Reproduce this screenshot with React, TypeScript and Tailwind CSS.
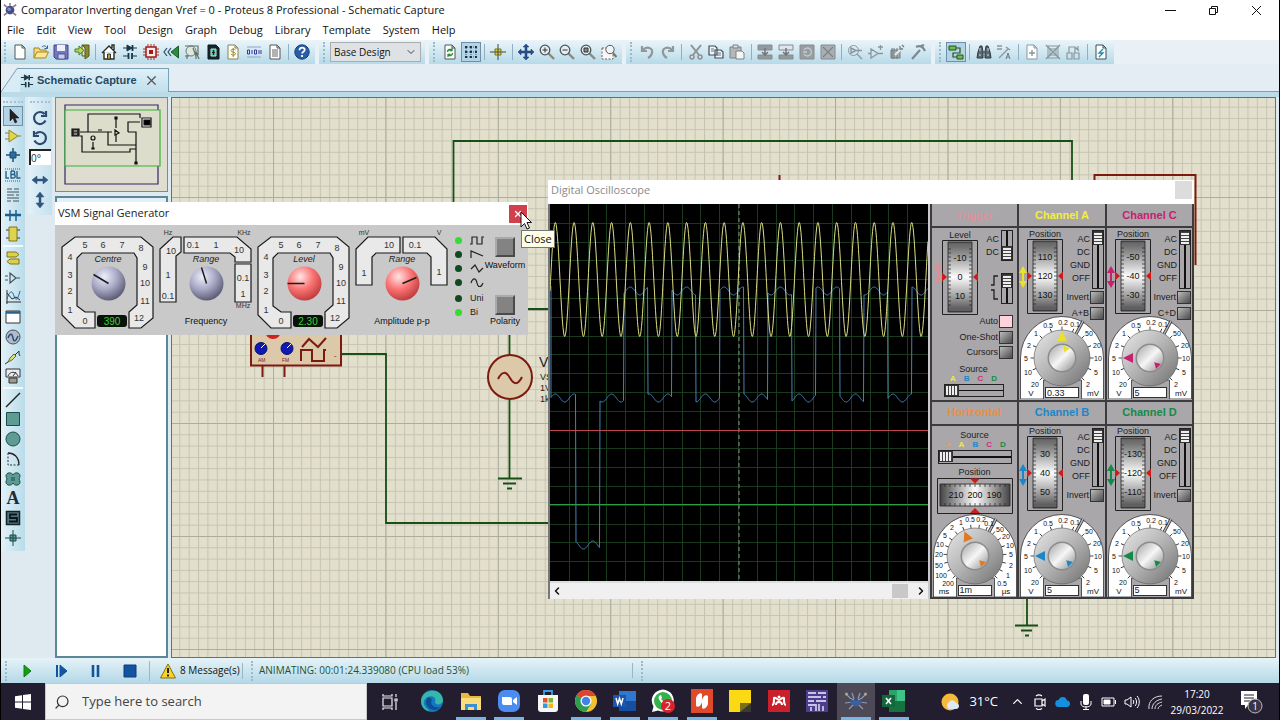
import React from "react";
import { ChevronUp, ChevronDown, ChevronLeft, ChevronRight, Search, X } from "lucide-react";

type Kids = { children?: React.ReactNode };

/* ---------- toolbar primitives ---------- */

function Tool({ label, active, children }: Kids & { label: string; active?: boolean }) {
  return (
    <button
      type="button"
      aria-label={label}
      title={label}
      className={
        "flex h-[18px] w-[18px] shrink-0 items-center justify-center " +
        (active ? "bg-[#b5d3e6] outline outline-1 outline-[#6f8fa5]" : "")
      }
    >
      <svg viewBox="0 0 16 16" className="h-4 w-4" fill="none" stroke="#333" strokeWidth="1">
        {children}
      </svg>
    </button>
  );
}

const Sep = () => (
  <span className="flex h-4 w-1 shrink-0 justify-center">
    <span className="h-4 w-px bg-[#8fb0c4]" />
  </span>
);

const Grip = () => <span className="h-5 w-0 shrink-0 border-l-2 border-dotted border-[#9db9ca]" />;

const Lens = ({ children }: Kids) => (
  <g>
    <path d="M9.5 9.5 15 15" stroke="#8a8a80" strokeWidth="2.4" />
    <circle cx="6" cy="6" r="4.8" fill="#e3edf2" stroke="#4a555c" strokeWidth="1.3" />
    {children}
  </g>
);

const Gates = () => (
  <g stroke="#173848" fill="#173848">
    <path d="M1 4h4M9 4h6M1 12h5M10 12h5" strokeWidth="1.2" />
    <path d="M5 1v6l5-3z" />
    <path d="M10.5 1v6M6.5 9v6M10 9v6" strokeWidth="1.8" />
  </g>
);

const PageShape = ({ stroke = "#555" }: { stroke?: string }) => (
  <path d="M3 1h7l3 3v11H3zM10 1v3h3" fill="#fdfefe" stroke={stroke} />
);

function MainToolbar() {
  return (
    <div className="flex h-6 items-center bg-[#eaf1f6]">
      <div className="flex h-6 items-center gap-[5px] bg-gradient-to-b from-[#eaf5fa] to-[#b7dae8] pl-[3px]">
        <Grip />
        <div className="flex w-[304px] items-center justify-between pr-1">
          <Tool label="New Project"><PageShape /></Tool>
          <Tool label="Open Project">
            <path d="M1 14V4h5l1 2h6v2" fill="#f5dc7c" stroke="#a8821a" />
            <path d="M1 14 4 8h11.5l-3 6z" fill="#fbe897" stroke="#a8821a" />
            <path d="M9 3c2-2 4-1 5 1M14.5 1.500v3h-3" stroke="#3c5a94" />
          </Tool>
          <Tool label="Save Project">
            <path d="M1 1h14v14H3l-2-2z" fill="#7477bb" stroke="#42458b" />
            <path d="M4 1h8v6H4z" fill="#eef0fb" stroke="none" />
            <path d="M5 10h7v5H5z" fill="#c9cbea" stroke="#42458b" strokeWidth=".8" />
          </Tool>
          <Tool label="Close Project">
            <path d="M8 1h7v11l-4 3V4z" fill="#8c8a28" stroke="#55561a" />
            <path d="M8 1v11h3" stroke="#55561a" />
            <path d="M1 5h4V2l5 4.500-5 4.500V8H1z" fill="#b7d954" stroke="#4f7a1c" />
          </Tool>
          <Sep />
          <Tool label="Home Page">
            <path d="M1 9 8 2l7 7M3 8v7h10V8M11 4V1h2v5" fill="#fff" stroke="#2c2c24" strokeWidth="1.4" />
            <path d="M6.500 10h3v5h-3z" fill="#c79b2c" />
          </Tool>
          <Tool label="Schematic Capture"><Gates /></Tool>
          <Tool label="PCB Layout">
            <path d="M5 0v16M8 0v16M11 0v16M0 5h16M0 8h16M0 11h16" stroke="#a33" />
            <path d="M3 3h10v10H3z" fill="#fbe9e6" stroke="#a01c1c" strokeWidth="1.5" />
            <path d="M6 6h4v4H6z" fill="#a01c1c" stroke="none" />
          </Tool>
          <Tool label="3D Visualizer">
            <path d="M15.500 2v12L8 8z" fill="#2e8a3c" stroke="#1b5c27" />
            <path d="M4 4 1 8l3 4M8 4 5 8l3 4" stroke="#244d63" strokeWidth="1.200" />
          </Tool>
          <Tool label="Gerber Viewer">
            <circle cx="7" cy="7" r="5" fill="#dce8dc" stroke="#6c7c74" />
            <path d="M1 2h13v9M3 15v-4M1 12h4M12 15V8l3 7M12 12l-3-8" stroke="#5f6f66" strokeWidth="1.200" />
          </Tool>
          <Tool label="Design Explorer">
            <path d="M3 1h8l3 3v11H3z" fill="#12262c" stroke="#0a171b" />
            <path d="M6 5h5v7H6z" fill="#3b7" stroke="#cde" />
            <path d="M8.500 6v5M7 8.500h3" stroke="#12262c" />
          </Tool>
          <Tool label="Bill of Materials">
            <PageShape stroke="#8a8250" />
            <path d="M10.500 6c-1-1.500-4.500-1-4.500.7 0 2 4.500 1 4.500 3 0 1.800-3.500 2-4.500.3M8.200 4v9" stroke="#a38a1c" />
          </Tool>
          <Tool label="Source Code">
            <path d="M1 3h14M1 13h14" stroke="#8aa7c8" />
            <path d="M1.500 6h2v4h-2zM6 6v4M8.500 6h2v4h-2zM13 6v4M15 6v4" stroke="#3a3a9c" />
          </Tool>
          <Tool label="Project Notes">
            <PageShape />
            <path d="M5 6h6M5 8h6M5 10h6M5 12h6" stroke="#666" />
          </Tool>
          <Sep />
          <Tool label="Help">
            <circle cx="8" cy="8" r="7.200" fill="#2a5da8" stroke="#173d78" />
            <path d="M5.500 6.200C5.500 2.600 11 3 10.700 6c-.2 1.700-2.500 1.700-2.600 3.500M8.100 11v2" stroke="#fff" strokeWidth="1.800" />
          </Tool>
        </div>
      </div>
      <div className="ml-1 flex h-6 items-center gap-[5px] bg-gradient-to-b from-[#eaf5fa] to-[#b7dae8] pr-1 pl-1">
        <Grip />
        <div className="relative flex">
          <select
            aria-label="Design variant"
            className="h-5 w-[91px] appearance-none border border-[#a9adb0] bg-[#dfe2e4] pl-[3px] text-[10px] leading-[18px] text-[#111]"
            defaultValue="Base Design"
          >
            <option>Base Design</option>
          </select>
          <ChevronDown className="pointer-events-none absolute top-1 right-1 h-3 w-3 text-[#444]" />
        </div>
      </div>
      <div className="ml-1 flex h-6 items-center gap-1.5 bg-gradient-to-b from-[#eaf5fa] to-[#b7dae8] pl-1">
        <Grip />
        <div className="flex w-[181px] items-center justify-between pr-1">
          <Tool label="Redraw">
            <PageShape />
            <path d="M5.500 8c0-3 3-3 4.500-2M10.500 9c0 3-3 3-4.500 2M10 4v2.500H7.500M6 13v-2.500h2.500" stroke="#2f8a35" strokeWidth="1.300" />
          </Tool>
          <Tool label="Toggle Grid" active>
            <path d="M3 2v12M8 2v12M13 2v12M2 3h12M2 8h12M2 13h12" stroke="#31536b" strokeDasharray="1 1" />
            <path d="M2 3h2M7 3h2M12 3h2M2 8h2M7 8h2M12 8h2M2 13h2M7 13h2M12 13h2" stroke="#1c3345" strokeWidth="2" />
          </Tool>
          <Sep />
          <Tool label="Origin">
            <path d="M8 0v16M0 8h16" stroke="#444" />
            <path d="M5 5h6v6H5z" fill="#d8d23c" stroke="#77741a" />
            <path d="M8 5v6M5 8h6" stroke="#444" />
          </Tool>
          <Sep />
          <Tool label="Pan">
            <path d="M8 0l3 3H9v4h4V5l3 3-3 3V9H9v4h2l-3 3-3-3h2V9H3v2L0 8l3-3v2h4V3H5z" fill="#27508f" stroke="#1b3a6d" strokeWidth=".5" />
          </Tool>
          <Tool label="Zoom In"><Lens><path d="M6 3.500v5M3.500 6h5" /></Lens></Tool>
          <Tool label="Zoom Out"><Lens><path d="M3.500 6h5" /></Lens></Tool>
          <Tool label="Zoom All"><Lens><path d="M4 4h4v4H4z" fill="#888" /></Lens></Tool>
          <Tool label="Zoom Area">
            <path d="M1 4h11v11H1z" strokeDasharray="2 1.500" stroke="#666" fill="#f7f7f7" />
            <circle cx="9" cy="5.500" r="4.200" fill="#eef4f7" stroke="#555" />
            <path d="m12 9 3.500 4" stroke="#77776c" strokeWidth="2" />
          </Tool>
        </div>
      </div>
      <div className="ml-1 flex h-6 items-center gap-1.5 bg-gradient-to-b from-[#eaf5fa] to-[#b7dae8] pl-1">
        <Grip />
        <div className="flex w-[293px] items-center justify-between pr-1">
          <Tool label="Undo"><path d="M3 2v5h5M3.500 6.500C8 1.500 14 4 13 9c-.5 2.500-2 4-4 5" stroke="#8f989d" strokeWidth="2.200" /></Tool>
          <Tool label="Redo"><path d="M13 2v5H8M12.500 6.500C8 1.500 2 4 3 9c.5 2.500 2 4 4 5" stroke="#8f989d" strokeWidth="2.200" /></Tool>
          <Sep />
          <Tool label="Cut">
            <path d="M3 1l8 10M13 1 5 11" stroke="#8d9194" strokeWidth="2" />
            <circle cx="4" cy="13" r="2" stroke="#8d9194" strokeWidth="1.500" /><circle cx="12" cy="13" r="2" stroke="#8d9194" strokeWidth="1.500" />
          </Tool>
          <Tool label="Copy">
            <path d="M1 2h6l2 2v7H1zM7 6h6l2 2v6H7z" fill="#eef4f8" stroke="#3f4d58" strokeWidth="1.200" />
            <path d="M9 9h4M9 11h4M3 5h3M3 7h3" stroke="#6b7985" />
          </Tool>
          <Tool label="Paste">
            <path d="M1 3h11v11H1z" fill="#b5b8ba" stroke="#7d8184" /><path d="M4 1h5v3H4z" fill="#ddd" stroke="#7d8184" />
            <path d="M7 7h6l2 2v6H7z" fill="#f5f5f5" stroke="#7d8184" />
          </Tool>
          <Sep />
          <Tool label="Block Copy"><path d="M1 1h14v5H1zM1 11h14v4H1z" fill="#939a9e" stroke="#858c90" /><path d="M8 4v7M5 8l3 3 3-3" stroke="#6d7478" strokeWidth="1.500" /></Tool>
          <Tool label="Block Move"><path d="M1 1h14v5H1z" fill="#dfe5e8" stroke="#858c90" /><path d="M1 11h14v4H1z" fill="#939a9e" stroke="#858c90" /><path d="M8 4v7M5 8l3 3 3-3" stroke="#6d7478" strokeWidth="1.500" /></Tool>
          <Tool label="Block Rotate"><path d="M1 1h14v14H1z" fill="#979da1" stroke="#858c90" /><path d="M5 6a4 4 0 1 1 0 4M8 8H4" stroke="#c5cacd" strokeWidth="1.300" /></Tool>
          <Tool label="Block Delete"><path d="M1 1h14v14H1z" fill="#a9aeb1" stroke="#858c90" /><path d="m3 3 10 10M13 3 3 13" stroke="#7d8488" strokeWidth="1.300" /></Tool>
          <Sep />
          <Tool label="Pick Parts"><circle cx="6.500" cy="6.500" r="5" stroke="#8a979e" /><path d="M4 4l5 2.500L4 9zM9 6.500h6M10 10l5 5" stroke="#8a979e" strokeWidth="1.400" /></Tool>
          <Tool label="Make Device"><path d="M3 5v9l7-4.500zM0 9.500h3M10 9.500h5M10 3h5M12.500 1v5" stroke="#8a979e" strokeWidth="1.300" /></Tool>
          <Tool label="Packaging Tool"><path d="M2 6h9v8H2zM3 4v11M5 4v11M8 4v11" fill="#a5adb1" stroke="#737c81" /><path d="m6 11 7-7" stroke="#e3e9ec" strokeWidth="2.400" /><path d="M11 2v3h3M13 1l2 2" stroke="#737c81" strokeWidth="1.300" /></Tool>
          <Tool label="Decompose"><path d="m2 15 8-9M6 3c4-2 7 0 9 4M11 2l3-1" stroke="#7e898f" strokeWidth="2.200" /></Tool>
        </div>
      </div>
      <div className="ml-1 flex h-6 items-center gap-1.5 bg-gradient-to-b from-[#eaf5fa] to-[#b7dae8] pl-1">
        <Grip />
        <div className="flex w-[167px] items-center justify-between pr-1">
          <Tool label="Wire Autorouter" active>
            <path d="M1 2h7v4H1zM9 11h6v4H9z" fill="#6cc04a" stroke="#22531a" />
            <path d="M8 4h4v5H5v4h4" stroke="#22531a" strokeWidth="1.200" />
          </Tool>
          <Sep />
          <Tool label="Search and Tag">
            <path d="M2 8l2-6h2l1 6v6H1zM14 8l-2-6h-2L9 8v6h6z" fill="#5a6a75" stroke="#2b3841" /><path d="M7 8h2" stroke="#2b3841" /><path d="M3 11h2M11 11h2M4 4v3M12 4v3" stroke="#cfd8dd" />
          </Tool>
          <Tool label="Property Assignment">
            <path d="M1 2h5M1 5h5M3 14l9-9M10 3l4 3" stroke="#8a979e" strokeWidth="1.400" /><path d="m10 15 2-6 2 6M11 13h2" stroke="#6d7a82" />
          </Tool>
          <Sep />
          <Tool label="New Sheet"><PageShape stroke="#8a979e" /><path d="M8 6v6M5 9h6" stroke="#8a979e" strokeWidth="1.400" /></Tool>
          <Tool label="Remove Sheet"><path d="M3 2h10v12H3zM5 5h6v6H5z" stroke="#8a979e" /><path d="m1 1 14 14M15 1 1 15" stroke="#8a979e" strokeWidth="1.500" /></Tool>
          <Tool label="Exit to Parent"><path d="M2 9h5v6H2zM9 9h5v6H9zM4 9V3h6v6M10 3l4 4M13 2v4" stroke="#8a979e" strokeWidth="1.200" /></Tool>
          <Sep />
          <Tool label="Electrical Check"><PageShape stroke="#3f4d58" /><path d="m10 5-4 4h4l-4 4" stroke="#1c8ca0" strokeWidth="1.300" /></Tool>
        </div>
      </div>
    </div>
  );
}

/* ---------- side tool strips ---------- */

function SideTools() {
  return (
    <div className="flex h-[454px] w-6 shrink-0 flex-col items-center bg-gradient-to-r from-[#e2f1f8] to-[#b9dcea]">
      <span className="mt-1 mb-1 h-0 w-5 border-t-2 border-dotted border-[#a7c2d1]" />
      <div className="flex flex-1 flex-col items-center justify-between pb-1">
        <Tool label="Selection Mode" active><path d="M5 1v12l3-3 2 5 2-1-2-4h4z" fill="#222" stroke="#111" strokeWidth=".5" /></Tool>
        <Tool label="Component Mode"><path d="M4 2v12l9-6zM0 5h4M0 11h4M13 8h3" fill="#e3d44a" stroke="#8f8424" /></Tool>
        <Tool label="Junction Mode"><path d="M8 1v14M1 8h14" stroke="#1d4f78" strokeWidth="1.500" /><path d="M5 5h6v6H5z" fill="#2d6d9c" stroke="#1d4f78" /></Tool>
        <Tool label="Wire Label Mode">
          <path d="M0 2h16M0 14h16" stroke="#27638a" strokeDasharray="1 1" />
          <path d="M1 4v7h3M6 4v7h2.500a1.500 1.500 0 0 0 0-3.500H6M6 4h2a1.700 1.700 0 0 1 0 3.500M12 4v7h3.500" stroke="#27638a" strokeWidth="1.400" />
        </Tool>
        <Tool label="Text Script Mode"><path d="M2 2h5M9 2h5M2 5h12M2 8h7M11 8h3M2 11h12M2 14h4M8 14h6" stroke="#44525c" strokeWidth="1.200" /></Tool>
        <Tool label="Buses Mode"><path d="M0 8h16" stroke="#1b5f94" strokeWidth="2.500" /><path d="M5 3v5M11 3v5M5 8v6M11 8v6" stroke="#1b5f94" strokeWidth="1.500" /></Tool>
        <Tool label="Subcircuit Mode"><path d="M1 4h14M1 12h14" stroke="#333" /><path d="M4 1h8v14H4z" fill="#e0d34d" stroke="#7e7520" /></Tool>
        <span className="h-0.5 w-5 bg-[#f5fbfd]" />
        <Tool label="Terminals Mode"><path d="M2 2h9l3 2.500L11 7H2zM5 9h9v5H5l-3-2.500z" fill="#ddd04a" stroke="#7e7520" /></Tool>
        <Tool label="Device Pins Mode"><path d="M5 3v10l6-5zM0 6h3M0 10h3M11 8h4" stroke="#44525c" strokeWidth="1.200" /></Tool>
        <Tool label="Graph Mode"><path d="M2 1v14M1 13h15" stroke="#333" /><path d="M2 10c3-9 5-9 7-3s4 3 6-5" stroke="#27638a" /><path d="M2 4l5 6 4-2 4 3" stroke="#333" /></Tool>
        <Tool label="Active Popup Mode"><path d="M1 2h14v12H1z" fill="#fff" stroke="#333" /><path d="M1 3.500h14" stroke="#27638a" strokeWidth="2.500" /></Tool>
        <Tool label="Generator Mode"><circle cx="8" cy="8" r="7" fill="#b3bcc6" stroke="#44525c" /><path d="M3 9c2-5 4-5 5 0s3 3 5-2" stroke="#224a80" strokeWidth="1.400" /></Tool>
        <Tool label="Probe Mode"><path d="m3 13 2-4 4-4 2 2-4 4z" fill="#dfe07a" stroke="#66682e" /><path d="m10 6 4-4v3l1 2M0 15l3-2" stroke="#333" /></Tool>
        <Tool label="Instruments Mode"><path d="M1 1h14v8H1z" fill="#e9edef" stroke="#333" /><path d="M3 8c2-5 8-5 10 0M8 8l3-4" stroke="#333" /><path d="M4 10h8v5H4z" fill="#9c9a91" stroke="#333" /></Tool>
        <span className="h-0.5 w-5 bg-[#f5fbfd]" />
        <Tool label="2D Line"><path d="M1 15 15 1" stroke="#222" strokeWidth="1.400" /></Tool>
        <Tool label="2D Box"><path d="M1.500 1.500h13v13h-13z" fill="#5c9c93" stroke="#1f4b4a" /></Tool>
        <Tool label="2D Circle"><circle cx="8" cy="8" r="7" fill="#5c9c93" stroke="#1f4b4a" /></Tool>
        <Tool label="2D Arc"><path d="M3 2c6 0 11 4 11 12" stroke="#222" strokeWidth="1.300" /><path d="M3 2v12h11" strokeDasharray="2 1.500" /></Tool>
        <Tool label="2D Path"><path d="M8 4C7 1 1 1 1 5c0 1 .5 2 1 3-.5 1-1 2-1 3 0 4 6 4 7 1 1 3 7 3 7-1 0-1-.5-2-1-3 .5-1 1-2 1-3 0-4-6-4-7-1zM7 6v4M9 6v4" fill="#5c9c93" stroke="#1f4b4a" /></Tool>
        <button type="button" aria-label="2D Text" className="h-[18px] w-[18px] text-center font-['Liberation_Serif',serif] text-[18px] leading-[18px] font-bold text-[#222b33]">A</button>
        <Tool label="2D Symbol"><path d="M1.500 1.500h13v13h-13z" fill="#4f7680" stroke="#16242a" strokeWidth="1.500" /><path d="M12 4.500H5V8h7v3.500H4" stroke="#0d1417" strokeWidth="1.800" /></Tool>
        <Tool label="2D Marker"><path d="M8 0v16M0 8h16" stroke="#1f4b4a" /><path d="M5 5h6v6H5z" fill="#5c9c93" stroke="#1f4b4a" /><path d="M8 5v6M5 8h6" stroke="#1f4b4a" /></Tool>
      </div>
    </div>
  );
}

function RotateTools() {
  return (
    <div className="flex h-[118px] w-6 shrink-0 flex-col items-center gap-0.5 bg-gradient-to-r from-[#e2f1f8] to-[#c5e1ee]">
      <span className="mt-1 mb-1 h-0 w-5 border-t-2 border-dotted border-[#a7c2d1]" />
      <Tool label="Rotate Clockwise"><path d="M13.500 10.500a6 6 0 1 1-1-6.500M14 1v5H9" stroke="#2c4a6e" strokeWidth="2.200" /></Tool>
      <Tool label="Rotate Anti-clockwise"><path d="M2.500 10.500a6 6 0 1 0 1-6.500M2 1v5h5" stroke="#2c4a6e" strokeWidth="2.200" /></Tool>
      <input
        aria-label="Rotation angle"
        defaultValue="0°"
        className="h-4 w-[22px] border-t-2 border-l-2 border-[#222] bg-white text-[10px] leading-3 text-[#333] outline-none"
      />
      <span className="h-0.5" />
      <Tool label="X-mirror"><path d="M0 8l5-4v3h6V4l5 4-5 4V9H5v3z" fill="#2f5680" stroke="#2f5680" strokeWidth=".5" /></Tool>
      <Tool label="Y-mirror"><path d="M8 0l4 5H9v6h3l-4 5-4-5h3V5H4z" fill="#2f5680" stroke="#2f5680" strokeWidth=".5" /></Tool>
    </div>
  );
}

function SidePanels() {
  return (
    <div className="flex w-[113px] shrink-0 flex-col gap-1">
      <div className="h-[95px] border border-[#7b8b92] bg-[#dfddd0] pt-[6px] pl-[8px]">
        <svg viewBox="0 0 98 82" className="h-[82px] w-[98px]" fill="none" stroke="#111" strokeWidth="1.200">
          <path d="M1 1h93v79H1z" fill="#dfddd0" stroke="#2b2b66" />
          <path d="M1 6h95v56H1z" fill="#dcddca" stroke="#35b135" />
          <path d="M24 28V10h52v4M24 28H16M24 28h24M16 32h2v16h48v-3h6M44 28v13h28v-3M64 28h8v31M64 28V18h12M29 38v6M52 14v10M52 30v8" />
          <path d="M8 25h7v7H8z" fill="#333" /><path d="M78 14h9v9h-9z" fill="#fff" /><path d="M80 16h6v5h-6z" fill="#000" />
          <circle cx="29" cy="34" r="2" /><path d="M51 26v5l4-2zM34 26h4" />
          <path d="M10 27h3M10 30h3" stroke="#fff" strokeWidth=".8" />
          <path d="M71 58h2v2h-2zM51 13h2v2h-2zM28 44h2v1h-2z" fill="#111" />
        </svg>
      </div>
      <div className="min-h-0 flex-1 border-2 border-[#5b8798] bg-white">
        <div className="h-6 bg-[#e3f0f8]" />
      </div>
    </div>
  );
}

/* ---------- schematic ---------- */

function Schematic() {
  return (
    <div className="min-w-0 flex-1 border border-[#6b6f66] bg-[#e2dfcc]">
      <svg className="h-full w-full" fill="none">
        <defs>
          <pattern id="minor" x="7.300" y="8.600" width="9.370" height="11.300" patternUnits="userSpaceOnUse">
            <path d="M.5 0v11.300M0 .5h9.370" stroke="#c5c3b2" />
          </pattern>
          <pattern id="major" x="101" y="99" width="112.400" height="113" patternUnits="userSpaceOnUse">
            <path d="M.5 0v113M0 .5h112.400" stroke="#aeac9c" />
          </pattern>
        </defs>
        <rect width="100%" height="100%" fill="url(#minor)" />
        <rect width="100%" height="100%" fill="url(#major)" />
        <g transform="translate(-172 -98)">
          <g stroke="#165016" strokeWidth="1.800">
            <path d="M453.500 204v-63H1072v41M520 309h30M509.500 330v26M509.500 400v78M341 354h45v169h164M1027 598v27M1015 625.500h23" />
            <path d="M498 478.500h24M503 483.500h13M507 488.500h5M1021 630.500h11M1025 635.500h4" />
          </g>
          <g stroke="#7d1a10" strokeWidth="2">
            <path d="M1094.500 182v-7h101v90M779.500 175v6" />
            <path d="M251 320h90v45.500h-90z" fill="#dcc9aa" />
            <path d="M262.500 366v11M284.500 366v11M302 347l7-8 9 8 8-9" />
            <path d="M301 361v-11h11v11h12v-11h2" />
            <circle cx="510" cy="377" r="22" fill="#dcc9aa" />
            <path d="M498 379c4-8 8-8 12-1s8 7 12-1" />
          </g>
          <circle cx="273" cy="331" r="8" fill="#d02020" />
          <g fill="#1019b4" stroke="#0a0f60">
            <circle cx="261" cy="348.500" r="6" />
            <circle cx="287" cy="348.500" r="6" />
            <path d="m261 348 4-4M287 348l4-4" stroke="#fff" />
          </g>
          <g className="font-['Liberation_Sans',sans-serif]" fill="#7d1a10">
            <text x="258" y="362" fontSize="5">AM</text>
            <text x="282" y="362" fontSize="5">FM</text>
            <text x="334" y="358" fontSize="8">-</text>
          </g>
          <g className="font-['Liberation_Sans',sans-serif]" fill="#222">
            <text x="539" y="367" fontSize="14">V1</text>
            <text x="540" y="380" fontSize="9">VSINE</text>
            <text x="540" y="391" fontSize="9">1V</text>
            <text x="540" y="402" fontSize="9">1k</text>
          </g>
        </g>
      </svg>
    </div>
  );
}

/* ---------- signal generator window ---------- */

type Mark = [string, number, number];

function GenDial(p: {
  name: string; shapes: string[]; marks: Mark[]; units?: Mark[]; color: "blue" | "red";
  px: number; py: number; lcd?: string; caption?: string;
}) {
  return (
    <svg viewBox="-1 -9 94 103" className="h-[103px] w-[94px] shrink-0 font-['Liberation_Sans',sans-serif]" role="img" aria-label={p.name} textAnchor="middle">
      <defs>
        <radialGradient id="kblue" cx=".38" cy=".3" r=".75"><stop offset="0" stopColor="#eeeefa" /><stop offset=".5" stopColor="#a9a9c6" /><stop offset="1" stopColor="#54546e" /></radialGradient>
        <radialGradient id="kred" cx=".38" cy=".3" r=".75"><stop offset="0" stopColor="#ffe4e4" /><stop offset=".5" stopColor="#fa7474" /><stop offset="1" stopColor="#bb3838" /></radialGradient>
      </defs>
      {p.shapes.map((s) => <polygon key={s} points={s} fill="#e9e9e9" stroke="#1a1a1a" strokeWidth="1.200" />)}
      {p.marks.map(([t, x, y]) => <text key={t + x} x={x} y={y + 3} fontSize="9" fill="#333">{t}</text>)}
      {(p.units || []).map(([t, x, y]) => <text key={t} x={x} y={y + 2} fontSize="7" fill="#333">{t}</text>)}
      <text x="46" y="25" fontSize="9" fontStyle="italic" fill="#222">{p.name}</text>
      <circle cx="46.500" cy="46.500" r="17" fill={p.color === "blue" ? "url(#kblue)" : "url(#kred)"} />
      <path d={`M46.500 46.500l${p.px} ${p.py}`} stroke="#1c1c1c" strokeWidth="1.500" />
      {p.lcd && <rect x="35" y="78" width="30" height="12" rx="3" fill="#0a120a" />}
      {p.lcd && <text x="50" y="88" fontSize="10" fill="#3bd13b">{p.lcd}</text>}
      {p.caption && <text x="46" y="87" fontSize="9" fill="#111">{p.caption}</text>}
    </svg>
  );
}

const ringShape = "13,0 79,0 91,10 91,81 79,91 67,91 67,75 75,68 75,21 72,16 20,16 15,21 15,69 23,75 33,75 33,91 13,91 0,78 0,10";
const ringMarks: Mark[] = [["5", 23, 8], ["6", 41, 8], ["7", 60, 8], ["8", 79, 11], ["9", 83, 30], ["10", 83, 46], ["11", 83, 64], ["12", 77, 81], ["4", 8, 20], ["3", 8, 38], ["2", 8, 54], ["1", 8, 73], ["0", 23, 84]];

function Led({ on }: { on?: boolean }) {
  return <span className={"h-[7px] w-[7px] rounded-full " + (on ? "bg-[#35dc35]" : "bg-[#0f4a20]")} />;
}

function Wave({ d }: { d: string }) {
  return <svg viewBox="0 0 14 9" className="h-[9px] w-[14px]" fill="none" stroke="#222" strokeWidth="1.200"><path d={d} /></svg>;
}

function SignalGenerator() {
  return (
    <section aria-label="VSM Signal Generator" className="absolute top-[110px] left-[54px] z-20 w-[473px] bg-[#c9c9c9]">
      <header className="flex h-[23px] items-center justify-between bg-white pl-[3px] text-[11px] text-[#222]">
        <h2>VSM Signal Generator</h2>
        <button type="button" aria-label="Close" className="mr-[1px] flex h-[18px] w-[18px] items-center justify-center bg-[#d1404c]">
          <X className="h-2.5 w-2.5 text-white" strokeWidth={3} />
        </button>
      </header>
      <div className="flex h-[110px] pt-[3px] pl-1.5">
        <div className="flex gap-1">
          <GenDial name="Centre" color="blue" shapes={[ringShape]} marks={ringMarks} px={-15} py={-9} lcd="390" />
          <GenDial name="Range" color="blue" px={-5} py={-16} caption="Frequency"
            shapes={["0,12 13,0 21,0 21,15 16,19 16,65 0,65", "24,0 77,0 91,12 91,25 75,25 75,20 70,16 24,16", "75,27 91,27 91,65 75,65"]}
            marks={[["10", 11, 14], ["1", 8, 38], ["0.1", 8, 59], ["0.1", 33, 8], ["1", 56, 8], ["10", 79, 13], ["0.1", 83, 41], ["1", 83, 57]]}
            units={[["Hz", 8, -4], ["KHz", 84, -4], ["MHz", 83, 69]]} />
          <GenDial name="Level" color="red" shapes={[ringShape]} marks={ringMarks} px={-17} py={0} lcd="2.30" />
          <GenDial name="Range" color="red" px={14} py={-6} caption="Amplitude p-p"
            shapes={["0,12 12,0 44,0 44,16 20,16 16,20 16,48 0,48", "47,0 79,0 91,12 91,48 75,48 75,20 71,16 47,16"]}
            marks={[["10", 33, 8], ["1", 8, 36], ["0.1", 59, 8], ["1", 83, 35]]}
            units={[["mV", 8, -4], ["V", 83, -4]]} />
        </div>
        <div className="ml-1.5 flex flex-col gap-[5px] pt-2 font-['Liberation_Sans',sans-serif] text-[9px] leading-[9px] text-[#222]">
          <div className="flex h-[9px] items-center gap-2"><Led on /><Wave d="M0 8h2V1h5v7h5V1h2" /></div>
          <div className="flex h-[9px] items-center gap-2"><Led /><Wave d="M1 8V1l12 5" /></div>
          <div className="flex h-[9px] items-center gap-2"><Led /><Wave d="M1 5l4-4 4 7 4-4" /></div>
          <div className="flex h-[9px] items-center gap-2"><Led /><Wave d="M1 5c2-6 5-5 6 0s4 5 6 0" /></div>
          <div className="mt-0.5 flex h-[9px] items-center gap-2"><Led />Uni</div>
          <div className="flex h-[9px] items-center gap-2"><Led on />Bi</div>
        </div>
        <div className="ml-[1px] flex w-10 flex-col items-center pt-[9px] font-['Liberation_Sans',sans-serif] text-[9px] leading-3 text-[#111]">
          <button type="button" aria-label="Waveform" className="h-5 w-5 border-2 border-[#4a4a4a] border-t-[#aaa] border-l-[#aaa] bg-[#838383]" />
          <span className="mt-0.5">Waveform</span>
          <button type="button" aria-label="Polarity" className="mt-6 h-5 w-5 border-2 border-[#4a4a4a] border-t-[#aaa] border-l-[#aaa] bg-[#838383]" />
          <span>Polarity</span>
        </div>
      </div>
    </section>
  );
}

/* ---------- oscilloscope window ---------- */

const sine = (x: number) => Math.cos(((x - 5.300) / 18.760) * Math.PI * 2);

const yellowTrace = Array.from({ length: 757 }, (_, i) => {
  const x = i / 2;
  return `${x},${(75.500 - 57 * sine(x)).toFixed(1)}`;
}).join(" ");

const blueTrace = (() => {
  const pts: string[] = ["1,82"];
  for (let i = 2; i <= 756; i++) {
    const x = i / 2;
    const seg = Math.floor((x - 2) / 24);
    const base = seg === 1 ? 341 : seg <= 2 || seg % 2 === 0 ? 194 : 87;
    pts.push(`${x},${(base - 4 * sine(x)).toFixed(1)}`);
  }
  return pts.join(" ");
})();

const gridLines = Array.from({ length: 19 }, (_, i) => Math.round((i + 1) * 18.800) + 0.500);

function Screen() {
  return (
    <svg viewBox="0 0 378 377" className="block h-[377px] w-full bg-black" preserveAspectRatio="none" fill="none" role="img" aria-label="Oscilloscope display">
      {gridLines.map((v) => (
        <path key={v} d={`M${v} 0v377M0 ${v}h378`} stroke="#1a3a1e" strokeWidth="1" />
      ))}
      <path d="M189 0v377" stroke="#8c8c8c" strokeDasharray="4 3" />
      <path d="M0 226.500h378" stroke="#c04450" />
      <path d="M0 300.500h378" stroke="#2f9a42" />
      <polyline points={blueTrace} stroke="#4a80b4" />
      <polyline points={yellowTrace} stroke="#dedf83" />
    </svg>
  );
}

function Dial(p: { name: string; labels: Mark[]; left: string; right: string; value: string; color: string; a: number; b: number; ticks: number[] }) {
  return (
    <div className="relative h-[83px] w-[84px]">
      <svg viewBox="-42 -42 84 83" className="h-[83px] w-[84px] font-['Liberation_Sans',sans-serif]" role="img" aria-label={p.name} textAnchor="middle">
        <defs>
          <linearGradient id="dOuter" x1="0" y1="0" x2="1" y2="1"><stop offset="0" stopColor="#e9e9e9" /><stop offset=".5" stopColor="#b2b2b2" /><stop offset="1" stopColor="#6e6e6e" /></linearGradient>
          <linearGradient id="dInner" x1="0" y1="0" x2="1" y2="1"><stop offset="0" stopColor="#a5a5a5" /><stop offset=".5" stopColor="#f6f6f6" /><stop offset="1" stopColor="#8c8c8c" /></linearGradient>
        </defs>
        <path d="M-41.500 41V0A41.500 41.500 0 0 1 41.500 0V41H19.500V22H-18.500V41Z" fill="#fff" stroke="#333" strokeWidth=".8" />
        <path d="M14-24 21-37" stroke="#333" strokeWidth="3" />
        <path d="M14-24 21-37" stroke="#bbb" strokeWidth="1.500" />
        {p.ticks.map((t) => (
          <path key={t} d="M0-27.500V-31.500" transform={`rotate(${t})`} stroke="#222" strokeWidth=".8" />
        ))}
        {p.labels.map(([t, x, y]) => <text key={t + x} x={x} y={y + 2.500} fontSize="7" fill="#111">{t}</text>)}
        <circle r="28" fill="url(#dOuter)" stroke="#555" strokeWidth=".6" />
        <path d="M0-27-5-17H5z" fill={p.color} transform={`rotate(${p.a})`} />
        <circle r="14.500" fill="#8b8b8b" />
        <circle r="13" fill="url(#dInner)" />
        <path d="M0-6-3.500-12H3.500z" fill={p.color} transform={`rotate(${p.b})`} />
        <text x="-31" y="38" fontSize="8" fill="#111">{p.left}</text>
        <text x="31" y="38" fontSize="8" fill="#111">{p.right}</text>
      </svg>
      <input
        aria-label={p.name + " value"}
        defaultValue={p.value}
        className="absolute bottom-[1px] left-[25px] h-[11px] w-[34px] border border-[#333] bg-white pl-[1px] font-['Liberation_Sans',sans-serif] text-[9px] leading-[9px] text-[#222] outline-none"
      />
    </div>
  );
}

const gainLabels: Mark[] = [["20", -27, 26], ["10", -34, 14], ["5", -36, 0], ["2", -33, -13], ["1", -26, -25], ["0.5", -14, -33], ["0.2", 1, -36], ["0.1", 13, -34], ["50", 27, -25], ["20", 35, -13], ["10", 36, 0], ["5", 34, 14], ["2", 26, 26]];
const gainTicks = [-135, -112, -90, -67, -45, -22, 0, 22, 45, 67, 90, 112, 135];
const timeLabels: Mark[] = [["200", -27, 27], ["100", -34, 19], ["50", -36, 9], ["20", -36, -2], ["10", -35, -12], ["5", -30, -21], ["2", -23, -29], ["1", -14, -34], ["0.5", -5, -37], ["0.2", 6, -37], ["0.1", 14, -33], ["50", 25, -27], ["20", 31, -20], ["10", 35, -11], ["5", 36, -2], ["2", 36, 9], ["1", 33, 19], ["0.5", 27, 27]];
const timeTicks = [-135, -119, -103, -87, -71, -55, -39, -23, -8, 8, 23, 39, 55, 71, 87, 103, 119, 135];

function Wheel({ name, marks }: { name: string; marks: string[] }) {
  return (
    <svg viewBox="0 0 36 75" className="h-[75px] w-9" role="img" aria-label={name + " " + marks[1]} textAnchor="middle">
      <defs>
        <linearGradient id="wv" x1="0" y1="0" x2="0" y2="1"><stop offset="0" stopColor="#5b5b5b" /><stop offset=".2" stopColor="#999" /><stop offset=".5" stopColor="#fbfbfb" /><stop offset=".8" stopColor="#999" /><stop offset="1" stopColor="#4b4b4b" /></linearGradient>
      </defs>
      <path d="M.5.500h35v74H.5z" fill="#a8a6a9" stroke="#222" />
      <path d="M6 2h24v70H6z" fill="url(#wv)" stroke="#222" strokeWidth=".8" />
      <path d="M7 5h22M7 70h22" stroke="#777" strokeWidth=".6" />
      {[9, 13, 17, 21, 25, 29, 33, 37, 41, 45, 49, 53, 57, 61, 65].map((y) => (
        <path key={y} d={`M6 ${y}h3M30 ${y}h-3`} stroke="#222" strokeWidth=".7" />
      ))}
      <path d="M0 32.500v9l5-4.500zM36 32.500v9l-5-4.500z" fill="#d11a1a" />
      {marks.map((m, i) => <text key={m} x="18" y={21 + i * 19} fontSize="9" fill="#111" className="font-['Liberation_Sans',sans-serif]">{m}</text>)}
    </svg>
  );
}

function Arrows({ color }: { color: string }) {
  return (
    <svg viewBox="0 0 8 22" className="h-[22px] w-2 shrink-0" fill={color}><path d="M4 0l4 7H5v8h3l-4 7-4-7h3V7H0z" /></svg>
  );
}

const vThumb =
  "appearance-none border border-[#222] bg-[linear-gradient(90deg,transparent_40%,#111_40%,#111_60%,transparent_60%)] [writing-mode:vertical-lr] [&::-webkit-slider-thumb]:h-[14px] [&::-webkit-slider-thumb]:w-[10px] [&::-webkit-slider-thumb]:appearance-none [&::-webkit-slider-thumb]:border [&::-webkit-slider-thumb]:border-[#333] [&::-webkit-slider-thumb]:bg-[repeating-linear-gradient(0deg,#eee_0px,#eee_2px,#444_2px,#444_3px)]";
const hThumb =
  "appearance-none border border-[#222] bg-[linear-gradient(0deg,transparent_42%,#111_42%,#111_58%,transparent_58%)] [&::-webkit-slider-thumb]:h-[11px] [&::-webkit-slider-thumb]:w-[14px] [&::-webkit-slider-thumb]:appearance-none [&::-webkit-slider-thumb]:border [&::-webkit-slider-thumb]:border-[#333] [&::-webkit-slider-thumb]:bg-[repeating-linear-gradient(90deg,#eee_0px,#eee_2px,#444_2px,#444_3px)]";

function Press({ label, lit }: { label: string; lit?: boolean }) {
  return (
    <label className="flex items-center justify-end gap-px">
      <span>{label}</span>
      <button
        type="button"
        aria-label={label}
        className={
          "h-[13px] w-[14px] shrink-0 border border-[#333] " +
          (lit ? "bg-[#ffd3dc]" : "bg-gradient-to-br from-[#bdbdbd] to-[#4c4c4c]")
        }
      />
    </label>
  );
}

function PanelHead({ title, tone }: { title: string; tone: string }) {
  return (
    <h3 className={"flex h-6 items-center justify-center border-b-2 border-[#3c3c3e] text-[11px] font-bold " + tone}>{title}</h3>
  );
}

function Channel(p: { id: string; tone: string; color: string; marks: string[]; sum?: string; value: string; a: number; b: number }) {
  return (
    <section aria-label={"Channel " + p.id} className="border-r-2 border-b-2 border-[#3c3c3e]">
      <PanelHead title={"Channel " + p.id} tone={p.tone} />
      <div className="flex h-[171px] flex-col justify-between">
        <div className="relative z-10 flex h-[84px] justify-between pt-0.5 pr-px">
          <div className="flex items-center pt-3">
            <Arrows color={p.color} />
            <div className="-mt-3 flex flex-col items-center">
              <span className="leading-[10px]">Position</span>
              <Wheel name={"Channel " + p.id + " position"} marks={p.marks} />
            </div>
          </div>
          <div className="-ml-1 flex flex-col gap-[2px]">
            <div className="flex justify-end gap-0.5">
              <div className="flex flex-col pt-[3px] text-right leading-[13px]">
                <span>AC</span><span>DC</span><span>GND</span><span>OFF</span>
              </div>
              <input type="range" min={0} max={3} defaultValue={0} aria-label={"Channel " + p.id + " coupling"} className={"h-[59px] w-3 " + vThumb} />
            </div>
            <Press label="Invert" />
            {p.sum && <Press label={p.sum} />}
          </div>
        </div>
        <div className="flex justify-center">
          <Dial name={"Channel " + p.id + " gain"} labels={gainLabels} ticks={gainTicks} left="V" right="mV" value={p.value} color={p.color} a={p.a} b={p.b} />
        </div>
      </div>
    </section>
  );
}

function SourceLetters({ extra }: { extra?: boolean }) {
  return (
    <div className="flex justify-center gap-2 text-[8px] leading-[9px] font-bold">
      {extra && <span className="text-[#e8a05c]">-+</span>}
      <span className="text-[#f1ea3a]">A</span>
      <span className="text-[#1c86c8]">B</span>
      <span className="text-[#d02a7c]">C</span>
      <span className="text-[#158a48]">D</span>
    </div>
  );
}

function Oscilloscope() {
  return (
    <section aria-label="Digital Oscilloscope" className="absolute top-[88px] left-[547px] z-10 w-[646px] bg-[#a9a7aa]">
      <header className="flex h-6 items-center justify-between bg-white pr-0.5 pb-1 pl-[3px] text-[11px] text-[#8a8a8a]">
        <h2>Digital Oscilloscope</h2>
        <span className="h-[18px] w-[17px] bg-[#dcdcdc]" />
      </header>
      <div className="flex">
        <div className="min-w-0 flex-1 border-r-2 border-l-2 border-[#777] border-r-[#c9c9cb]">
          <Screen />
          <div className="flex h-[18px] items-center border-t-2 border-[#ddd] bg-[#f0f0f0]">
            <button type="button" aria-label="Scroll left" className="px-px"><ChevronLeft className="h-3 w-3" strokeWidth={3} /></button>
            <div className="flex flex-1 justify-end pr-1.5"><span className="h-[14px] w-4 bg-[#c8c8c8]" /></div>
            <button type="button" aria-label="Scroll right" className="px-px"><ChevronRight className="h-3 w-3" strokeWidth={3} /></button>
          </div>
        </div>
        <div className="grid shrink-0 grid-cols-[87px_88px_87px] border-l-2 border-[#3c3c3e] font-['Liberation_Sans',sans-serif] text-[9px] text-[#1c1c1c]">
          <section aria-label="Trigger" className="border-r-2 border-b-2 border-[#3c3c3e]">
            <PanelHead title="Trigger" tone="text-[#dd929b]" />
            <div className="flex h-[171px] flex-col pt-0.5 pr-1 pl-0.5">
              <div className="flex justify-between">
                <div className="flex items-center">
                  <Arrows color="#dd8f98" />
                  <div className="flex flex-col items-center">
                    <span className="leading-[10px]">Level</span>
                    <Wheel name="Trigger level" marks={["-10", "0", "10"]} />
                  </div>
                </div>
                <div className="flex flex-col items-end gap-3">
                  <div className="flex gap-0.5">
                    <div className="flex flex-col pt-[3px] text-right leading-[13px]"><span>AC</span><span>DC</span></div>
                    <input type="range" min={0} max={1} defaultValue={1} aria-label="Trigger coupling" className={"h-[31px] w-3 " + vThumb} />
                  </div>
                  <div className="flex gap-0.5">
                    <svg viewBox="0 0 9 28" className="h-7 w-[9px]" fill="none" stroke="#222" strokeWidth="1.300"><path d="M1 12h3V3h4M1 17h3v9h4" /></svg>
                    <input type="range" min={0} max={1} defaultValue={0} aria-label="Trigger edge" className={"h-[31px] w-3 " + vThumb} />
                  </div>
                </div>
              </div>
              <div className="flex flex-col gap-[2px]">
                <Press label="Auto" lit />
                <Press label="One-Shot" />
                <Press label="Cursors" />
              </div>
              <div className="mt-1 flex flex-col items-center">
                <span className="leading-[10px]">Source</span>
                <SourceLetters />
                <input type="range" min={0} max={3} defaultValue={0} aria-label="Trigger source" className={"mt-px h-[13px] w-[60px] " + hThumb} />
              </div>
            </div>
          </section>
          <Channel id="A" tone="text-[#f3ee3c]" color="#e9e12a" marks={["110", "120", "130"]} sum="A+B" value="0.33" a={0} b={22} />
          <Channel id="C" tone="text-[#c8206e]" color="#c8206e" marks={["-50", "-40", "-30"]} sum="C+D" value="5" a={-90} b={135} />
          <section aria-label="Horizontal" className="border-r-2 border-b-2 border-[#3c3c3e]">
            <PanelHead title="Horizontal" tone="text-[#e88f45]" />
            <div className="flex h-[171px] flex-col items-center justify-between">
              <div className="flex flex-col items-center pt-1">
                <span className="leading-[10px]">Source</span>
                <SourceLetters extra />
                <input type="range" min={0} max={4} defaultValue={0} aria-label="Horizontal source" className={"mt-px h-[14px] w-[74px] " + hThumb} />
                <span className="mt-0.5 leading-[12px]">Position</span>
                <svg viewBox="0 0 76 36" className="h-9 w-[76px]" textAnchor="middle" role="img" aria-label="Horizontal position 200">
                  <defs><linearGradient id="wh"><stop offset="0" stopColor="#444" /><stop offset=".25" stopColor="#a5a5a5" /><stop offset=".5" stopColor="#fafafa" /><stop offset=".75" stopColor="#a5a5a5" /><stop offset="1" stopColor="#444" /></linearGradient></defs>
                  <path d="M.5.500h75v35H.5z" fill="#a8a6a9" stroke="#222" />
                  <path d="M3 6h70v22H3z" fill="url(#wh)" stroke="#222" strokeWidth=".8" />
                  {[8, 13, 18, 23, 28, 33, 38, 43, 48, 53, 58, 63, 68].map((x) => <path key={x} d={`M${x} 6v3M${x} 28v-3`} stroke="#222" strokeWidth=".7" />)}
                  <path d="M33 .5h10l-5 5zM33 35h10l-5-5z" fill="#d11a1a" />
                  {["210", "200", "190"].map((t, i) => <text key={t} x={19 + i * 19} y="20" fontSize="9" fill="#111">{t}</text>)}
                </svg>
              </div>
              <Dial name="Timebase" labels={timeLabels} ticks={timeTicks} left="ms" right="µs" value="1m" color="#df7a22" a={-23} b={135} />
            </div>
          </section>
          <Channel id="B" tone="text-[#1c86c8]" color="#1c86c8" marks={["30", "40", "50"]} value="5" a={-90} b={135} />
          <Channel id="D" tone="text-[#158a48]" color="#158a48" marks={["-130", "-120", "-110"]} value="5" a={-90} b={135} />
        </div>
      </div>
    </section>
  );
}

/* ---------- bottom bars ---------- */

function StatusBar() {
  return (
    <footer className="flex h-[25px] shrink-0 items-center bg-gradient-to-b from-[#e6f3f8] to-[#b4d8e7] pl-1 text-[10px] text-[#111]">
      <Grip />
      <div className="flex items-center gap-4 pl-3">
        <Tool label="Play"><path d="M4 2v12l7-6z" fill="#12a012" stroke="#0c7d0c" /></Tool>
        <Tool label="Step"><path d="M3 2v12" stroke="#1254a0" strokeWidth="2" /><path d="M6 2v12l7-6z" fill="#1254a0" stroke="#1254a0" /></Tool>
        <Tool label="Pause"><path d="M5 2v12M10 2v12" stroke="#1254a0" strokeWidth="2.600" /></Tool>
        <Tool label="Stop"><path d="M2 2h12v12H2z" fill="#1254a0" stroke="#0d3f7a" /></Tool>
      </div>
      <span className="mx-2.5 h-5 w-px bg-[#9ab7c6]" />
      <button type="button" className="flex w-[83px] items-center gap-1 border-r border-[#9ab7c6] whitespace-nowrap">
        <svg viewBox="0 0 16 16" className="h-4 w-4 shrink-0"><path d="M8 1 15.500 15H.5z" fill="#f7d32c" stroke="#8a6d08" /><path d="M8 5v5M8 11.500v2" stroke="#111" strokeWidth="1.800" /></svg>
        8 Message(s)
      </button>
      <span className="w-2" />
      <Grip />
      <p className="w-[380px] border-r border-[#9ab7c6] pl-1.5 whitespace-nowrap text-[#1e5236]">ANIMATING: 00:01:24.339080 (CPU load 53%)</p>
      <span className="w-2" />
      <Grip />
    </footer>
  );
}

function TaskButton({ label, open, active, children }: Kids & { label: string; open?: boolean; active?: boolean }) {
  return (
    <button type="button" aria-label={label} className={"flex h-full w-[38px] shrink-0 flex-col items-center justify-end " + (active ? "bg-[#4d4956]" : "")}>
      <svg viewBox="0 0 24 24" className="mb-1 h-6 w-6" fill="none">{children}</svg>
      <span className={"h-[3px] w-[30px] " + (open ? "bg-[#7ab4e4]" : "")} />
    </button>
  );
}

function Taskbar() {
  return (
    <nav aria-label="Taskbar" className="flex h-[37px] shrink-0 items-stretch bg-[#231d30] text-white">
      <button type="button" aria-label="Start" className="flex w-11 items-center justify-center">
        <svg viewBox="0 0 16 16" className="h-4 w-4" fill="#fff"><path d="M0 2.200 7 1.300v6.200H0zM8 1.100 16 0v7.500H8zM0 8.500h7v6.200l-7-.9zM8 8.500h8V16l-8-1.100z" /></svg>
      </button>
      <label className="flex w-[322px] items-center gap-3 border border-[#c9c9c9] bg-[#f3f3f3] pl-2 text-[#333]">
        <Search className="h-4 w-4 -scale-x-100" strokeWidth={1.800} />
        <input placeholder="Type here to search" aria-label="Search" className="min-w-0 flex-1 bg-transparent text-[13px] text-[#333] outline-none placeholder:text-[#444]" />
      </label>
      <button type="button" aria-label="Task View" className="flex w-[46px] items-center justify-center">
        <svg viewBox="0 0 16 16" className="h-4 w-4" fill="none" stroke="#eee" strokeWidth="1.200"><path d="M1 4h9v8H1zM1 0v2h9V0M1 16v-2h9v2M14 0v3M14 8v8" /><path d="M13 5h2v2h-2z" /></svg>
      </button>
      <div className="flex w-[500px] justify-between">
        <TaskButton label="Edge">
          <circle cx="12" cy="12" r="11" fill="#1577c2" />
          <path d="M1 12C2-1 22-2 23 11c0 5-8 6-8 2 2-4-3-7-7-5-5 2-7 8 2 14C4 22 1 17 1 12z" fill="#36b8a8" />
          <path d="M8 8c-4 4-2 12 6 13 3 0 5-1 7-3-6 2-12-2-9-8z" fill="#0c4f93" />
        </TaskButton>
        <TaskButton label="File Explorer" open>
          <path d="M2 4h7l2 3h11v14H2z" fill="#e9b93c" /><path d="M2 9h20v12H2z" fill="#fbdc7d" /><path d="M6 21v-6h12v6h-3v-3H9v3z" fill="#3e8fd0" />
        </TaskButton>
        <TaskButton label="Zoom" open>
          <rect x="1" y="1" width="22" height="22" rx="7" fill="#4a8cf0" /><path d="M5 8h8a2 2 0 0 1 2 2v6H7a2 2 0 0 1-2-2zM16 11l4-3v8l-4-3z" fill="#fff" />
        </TaskButton>
        <TaskButton label="Microsoft Store">
          <path d="M8 6V2h8v4" stroke="#3aa0e0" strokeWidth="1.800" /><path d="M2 6h20v14a3 3 0 0 1-3 3H5a3 3 0 0 1-3-3z" fill="#f6f6f6" />
          <path d="M7 9h4.500v4.500H7z" fill="#e3532a" /><path d="M12.500 9H17v4.500h-4.500z" fill="#7bb52c" /><path d="M7 14.500h4.500V19H7z" fill="#2b9de0" /><path d="M12.500 14.500H17V19h-4.500z" fill="#f2b51d" />
        </TaskButton>
        <TaskButton label="Chrome" open>
          <circle cx="12" cy="12" r="11" fill="#f2c12e" /><path d="M12 12 2.500 6.500A11 11 0 0 1 21.800 7H12z" fill="#dc4437" /><path d="M2.500 6.500A11 11 0 0 0 12 23l5-8-5-3z" fill="#2f9e53" />
          <circle cx="12" cy="12" r="5.500" fill="#fff" /><circle cx="12" cy="12" r="4.200" fill="#4482ea" />
        </TaskButton>
        <TaskButton label="Word" open>
          <path d="M6 2h17v20H6z" fill="#2f78cf" /><path d="M6 12h17v10H6z" fill="#174f9e" /><path d="M0 6h13v12H0z" fill="#1c56ac" />
          <path d="M3 9l1.700 6L6.500 9.500 8.300 15 10 9" stroke="#fff" strokeWidth="1.500" />
        </TaskButton>
        <TaskButton label="WhatsApp" open>
          <path d="M1 23l1.500-5.500A11 11 0 1 1 7 21.500z" fill="#fff" /><circle cx="12" cy="12" r="9" fill="#35b24a" />
          <path d="M8 7c-2 3 4 10 8 9l1-3-3-1-1 1-3-3 1-1-1-3z" fill="#fff" />
          <circle cx="17" cy="17" r="7" fill="#d8232c" />
          <text x="17" y="21" fontSize="11" textAnchor="middle" fill="#fff">2</text>
        </TaskButton>
        <TaskButton label="Nitro" open>
          <path d="M1 0h22v24H1z" fill="#e04a2b" /><path d="M6 17V9c1-4 5-6 6-4v8c-1 4-4 6-6 4zM18 7v8c-1 4-5 6-6 4v-8c1-4 4-6 6-4z" fill="#fff" />
        </TaskButton>
        <TaskButton label="Sticky Notes">
          <path d="M1 1h22v22H1z" fill="#fbd914" /><path d="M23 14v9H12v-9z" fill="#3a3a30" /><path d="M12 23v-9h11z" fill="#7a6f1a" />
        </TaskButton>
        <TaskButton label="Mendeley">
          <path d="M1 1h22v22H1z" fill="#c9202c" /><path d="M5 16c2 0 2-2 2-7 2-1 3 2 5 2s3-3 5-2c0 5 0 7 2 7M9 16c0-4 6-4 6 0" stroke="#fff" strokeWidth="2" /><circle cx="12" cy="8" r="1.500" fill="#fff" />
        </TaskButton>
        <TaskButton label="SPSS">
          <path d="M1 1h22v22H1z" fill="#4b3f8c" /><path d="M3 4h8M13 4h8M3 8h13M18 8h3M3 12h6M11 12h10M3 16h8v6M14 22v-7M18 22v-5M6 22v-4" stroke="#cdbfe9" strokeWidth="1.800" />
        </TaskButton>
        <TaskButton label="Proteus" open active>
          <path d="M2 5l4 4 4 2M22 5l-4 4-4 2M1 14l8-1M23 14l-8-1M5 20l5-5M19 20l-5-5M8 4l2 6M16 4l-2 6" stroke="#8e9bb5" strokeWidth="1.200" /><path d="M8 11h8l2 3-6 4-6-4z" fill="#3b5f9c" /><circle cx="2.500" cy="5" r="1.500" fill="#b5a48c" /><circle cx="21.500" cy="5" r="1.500" fill="#b5a48c" />
        </TaskButton>
        <TaskButton label="Excel" open>
          <path d="M7 1h16v22H7z" fill="#2aa468" /><path d="M7 12h16v11H7z" fill="#14733f" /><path d="M15 1h8v11h-8z" fill="#3fc487" /><path d="M0 6h13v12H0z" fill="#12683a" />
          <path d="M4 9l5 6M9 9l-5 6" stroke="#fff" strokeWidth="1.600" />
        </TaskButton>
      </div>
      <div className="flex flex-1 items-center justify-end pr-4">
        <button type="button" className="flex items-center gap-2 pr-3 text-[13px]">
          <svg viewBox="0 0 20 20" className="h-5 w-5"><circle cx="9" cy="10" r="8.500" fill="#f5b93c" /><path d="M8 17a4 4 0 0 1 0-7c2-3 6-2 7 1 4 0 4 6 0 6z" fill="#dfe9f2" /></svg>
          31°C
        </button>
        <div className="flex items-center gap-[7px]">
          <ChevronUp className="h-[15px] w-[15px]" strokeWidth={2} />
          <svg viewBox="0 0 16 16" className="h-4 w-4" fill="none" stroke="#fff" strokeWidth="1.200"><path d="M3 5h7v7H3zM10 7l3-2v7l-3-2M4 2c2-1.500 4-1.500 6 0M4 14.500c2 1.500 4 1.500 6 0" /></svg>
          <svg viewBox="0 0 16 16" className="h-4 w-4"><path d="M4 13a3.500 3.500 0 0 1-.5-7C5 2 11 2 12 6.500c4 0 4 6.500 0 6.500z" fill="#1490df" /></svg>
          <svg viewBox="0 0 16 16" className="h-4 w-4" fill="#fff"><rect x="5" y="0" width="6" height="11" rx="2" /><path d="M3 7v3c0 4 10 4 10 0V7M8 12v3M5 15.500h6" fill="none" stroke="#fff" /></svg>
          <svg viewBox="0 0 16 16" className="h-4 w-4" fill="none" stroke="#fff"><path d="M1 4h12v8H1zM14.500 6v4" /><path d="M3 6h6v4H3z" fill="#fff" /></svg>
          <svg viewBox="0 0 16 16" className="h-4 w-4" fill="none" stroke="#fff"><path d="M1 6h2l4-3v10l-4-3H1zM9 6c1 1 1 3 0 4M11 4c2 2 2 6 0 8M13 2c3 3 3 9 0 12" /></svg>
          <svg viewBox="0 0 16 16" className="h-4 w-4" fill="none" stroke="#ddd"><path d="M2 15C1 7 7 2 15 2M5 15c0-5 4-9 10-10M8 15c0-4 3-6 7-7M11 15c0-2 2-3 4-4" /></svg>
        </div>
        <div className="w-16 pl-1 text-center text-[10px] leading-4"><p>17:20</p><p>29/03/2022</p></div>
        <button type="button" aria-label="Notifications" className="ml-3 shrink-0">
          <svg viewBox="0 0 24 26" className="h-[26px] w-6"><path d="M2 2h16v14H9l-3 4v-4H2z" fill="#fff" /><path d="M5 6h10M5 9h10M5 12h6" stroke="#231d30" strokeWidth="1.200" /><circle cx="16" cy="17" r="7" fill="#3a3446" stroke="#bbb" /><text x="16" y="21" fontSize="10" textAnchor="middle" fill="#fff">1</text></svg>
        </button>
      </div>
    </nav>
  );
}

export default function App() {
  return (
    <div className="flex h-screen min-h-[720px] flex-col overflow-hidden border-r border-l border-black bg-[#e6edf3] font-['Open_Sans','Noto_Sans',sans-serif] text-[#111]">
      <header className="flex h-5 items-center bg-white pl-[2px] text-[11px]">
        <svg viewBox="0 0 16 16" className="h-[14px] w-[14px]"><circle cx="8" cy="8" r="5" fill="#434d8c" /><path d="M1 2l4 3M15 2l-4 3M1 14l4-3M15 14l-4-3M8 0v3" stroke="#8b7d92" strokeWidth="1.800" /><circle cx="7" cy="7" r="2" fill="#8491c5" /></svg>
        <h1 className="ml-1 flex-1 whitespace-nowrap">Comparator Inverting dengan Vref = 0 - Proteus 8 Professional - Schematic Capture</h1>
        <div className="flex gap-8 pr-[17px]">
          <button type="button" aria-label="Minimize"><svg viewBox="0 0 11 11" className="h-[11px] w-[11px]" stroke="#111"><path d="M0 5.500h11" /></svg></button>
          <button type="button" aria-label="Restore"><svg viewBox="0 0 11 11" className="h-[11px] w-[11px]" fill="none" stroke="#111"><path d="M1.500 3.500h6v6h-6zM3.500 3V1.500h6v6H8" /></svg></button>
          <button type="button" aria-label="Close window"><svg viewBox="0 0 11 11" className="h-[11px] w-[11px]" stroke="#111"><path d="m1 1 9 9M10 1l-9 9" /></svg></button>
        </div>
      </header>
      <nav aria-label="Menu" className="flex h-5 items-center gap-3 bg-white pl-1.5 text-[11px]">
        {["File", "Edit", "View", "Tool", "Design", "Graph", "Debug", "Library", "Template", "System", "Help"].map((m) => (
          <button type="button" key={m}>{m}</button>
        ))}
      </nav>
      <MainToolbar />
      <div className="flex h-7 items-end border-b border-[#7aa0b5] bg-[#e4edf3]">
        <div className="-mb-px flex h-6">
          <svg viewBox="0 0 19 24" className="h-6 w-[19px]" fill="none"><path d="M0 24 16 1h4v23z" fill="#d8ecf6" /><path d="M0 24 16 .5h4" stroke="#7aa0b5" /></svg>
          <div className="flex items-center gap-[3px] border-t border-r border-[#7aa0b5] bg-gradient-to-b from-[#dff0f8] to-[#c0dfec] pr-[9px]">
            <svg viewBox="0 0 16 16" className="h-[14px] w-[14px]" fill="none"><Gates /></svg>
            <a href="#schematic" className="font-['Liberation_Sans',sans-serif] text-[11px] font-bold whitespace-nowrap text-[#27485e]">Schematic Capture</a>
            <button type="button" aria-label="Close tab"><X className="ml-1 h-[15px] w-[15px] text-[#555]" strokeWidth={2} /></button>
          </div>
        </div>
      </div>
      <main id="schematic" className="relative flex min-h-0 flex-1 bg-[#dfe9f0]">
        <div className="flex flex-1 gap-[3px] border-t-[5px] border-[#bcdbe9] pr-[3px]">
          <SideTools />
          <RotateTools />
          <SidePanels />
          <Schematic />
        </div>
        <SignalGenerator />
        <Oscilloscope />
        <div role="tooltip" className="absolute top-[138px] left-[520px] z-30 border border-[#777] bg-[#ffffe8] px-0.5 text-[11px] leading-4">Close</div>
        <svg viewBox="0 0 12 19" className="absolute top-[119px] left-[519px] z-40 h-[19px] w-3"><path d="M1 1v15l3.500-3.500L7 18l2.500-1L7 11.500h4.500z" fill="#fff" stroke="#111" /></svg>
      </main>
      <StatusBar />
      <Taskbar />
    </div>
  );
}
